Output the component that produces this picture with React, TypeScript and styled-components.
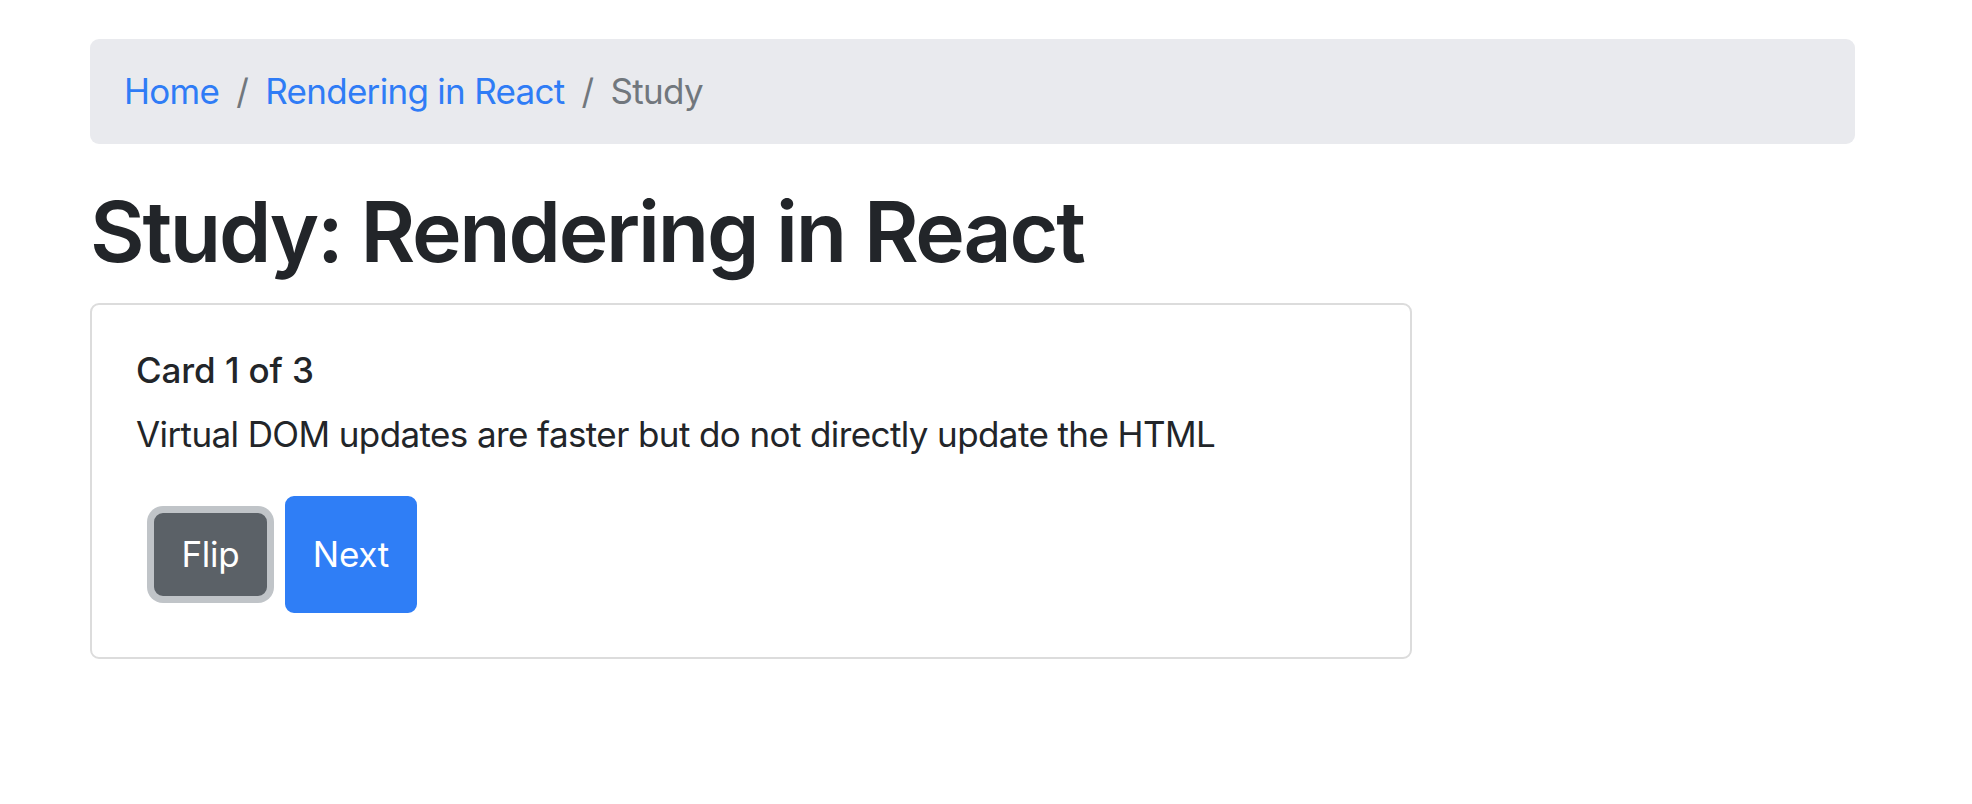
import React from "react";
import styled, { createGlobalStyle } from "styled-components";

const GlobalStyle = createGlobalStyle`
  html,
  body {
    margin: 0;
    padding: 0;
    background: #ffffff;
  }

  body {
    font-family: Inter, "Noto Sans", "Liberation Sans", sans-serif;
    color: #222529;
    -webkit-font-smoothing: antialiased;
  }
`;

const Page = styled.main`
  padding: 39px 0 0 90px;
`;

const Breadcrumb = styled.ol`
  display: flex;
  align-items: center;
  list-style: none;
  width: 1765px;
  box-sizing: border-box;
  margin: 0 0 35px;
  padding: 26px 34px;
  background: #e9eaee;
  border-radius: 9px;
  font-size: 35px;
  line-height: 1.5;
  letter-spacing: -0.7px;
`;

const Crumb = styled.li<{ $active?: boolean }>`
  display: flex;
  color: ${(p) => (p.$active ? "#71777d" : "#2f7cf6")};

  &:not(:first-child)::before {
    content: "/";
    color: #71777d;
    padding: 0 17px;
  }

  a {
    color: inherit;
    text-decoration: none;
  }
`;

const Title = styled.h1`
  margin: 0 0 19px;
  font-size: 84px;
  font-weight: 600;
  line-height: 1.25;
  letter-spacing: -2.25px;
  color: #222529;
`;

const Card = styled.section`
  width: 1322px;
  box-sizing: border-box;
  border: 2px solid #dcdcdc;
  border-radius: 9px;
  background: #ffffff;
`;

const CardBody = styled.div`
  padding: 44px;
`;

const CardTitle = styled.h5`
  margin: 0 0 17.5px;
  font-size: 35px;
  font-weight: 500;
  line-height: 1.2;
  letter-spacing: -0.1px;
`;

const CardText = styled.p`
  margin: 0 0 35px;
  font-size: 35px;
  line-height: 1.5;
  letter-spacing: -0.6px;
`;

const ButtonRow = styled.div`
  display: flex;
  align-items: stretch;
`;

const Button = styled.button<{ $variant: "secondary" | "primary"; $focused?: boolean }>`
  font-family: inherit;
  font-size: 35px;
  line-height: 1.5;
  letter-spacing: -0.3px;
  padding: 13px 26px;
  border-radius: 9px;
  border: 2px solid
    ${(p) => (p.$variant === "primary" ? "#2f7ef6" : "#5b6167")};
  background: ${(p) => (p.$variant === "primary" ? "#2f7ef6" : "#5b6167")};
  color: #ffffff;
  cursor: pointer;
  margin: ${(p) => (p.$focused ? "17.5px" : "0")};
  box-shadow: ${(p) =>
    p.$focused ? "0 0 0 7px rgba(130, 138, 145, 0.5)" : "none"};
  outline: none;
`;

export default function App() {
  return (
    <>
      <GlobalStyle />
      <Page>
        <nav aria-label="breadcrumb">
          <Breadcrumb>
            <Crumb>
              <a href="#">Home</a>
            </Crumb>
            <Crumb>
              <a href="#">Rendering in React</a>
            </Crumb>
            <Crumb $active>Study</Crumb>
          </Breadcrumb>
        </nav>
        <Title>Study: Rendering in React</Title>
        <Card>
          <CardBody>
            <CardTitle>Card 1 of 3</CardTitle>
            <CardText>
              Virtual DOM updates are faster but do not directly update the HTML
            </CardText>
            <ButtonRow>
              <Button $variant="secondary" $focused>
                Flip
              </Button>
              <Button $variant="primary">Next</Button>
            </ButtonRow>
          </CardBody>
        </Card>
      </Page>
    </>
  );
}
